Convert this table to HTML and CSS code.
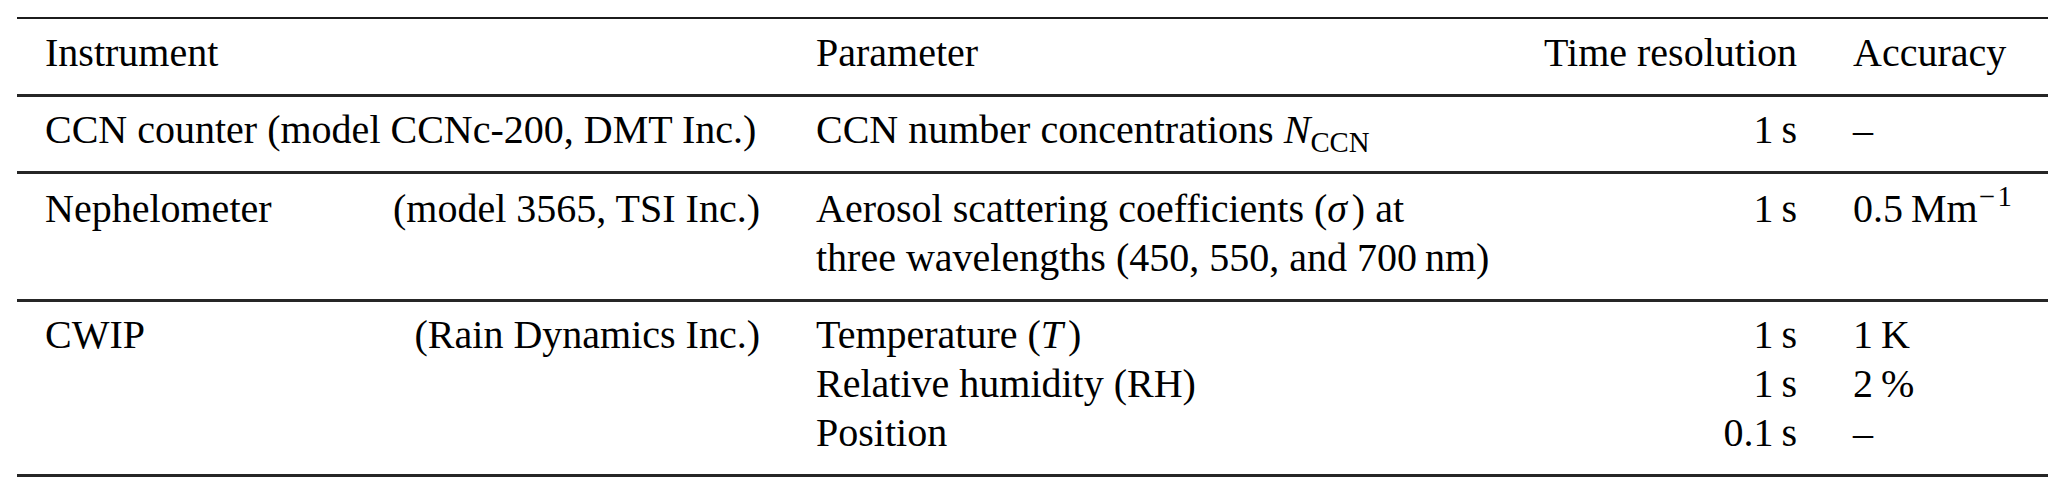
FILE: index.html
```html
<!DOCTYPE html>
<html lang="en">
<head>
<meta charset="utf-8">
<title>Instruments</title>
<link rel="stylesheet" href="styles.css">
</head>
<body>
<table class="inst-table">
  <colgroup>
    <col class="c-inst">
    <col class="c-param">
    <col class="c-time">
    <col class="c-acc">
  </colgroup>
  <thead>
    <tr>
      <th>Instrument</th>
      <th>Parameter</th>
      <th class="num">Time resolution</th>
      <th>Accuracy</th>
    </tr>
  </thead>
  <tbody>
    <tr>
      <td>CCN counter (model CCNc-200, DMT Inc.)</td>
      <td>CCN number concentrations <i class="mi">N</i><sub class="sub">CCN</sub></td>
      <td class="num">1&thinsp;s</td>
      <td>–</td>
    </tr>
    <tr class="row-tall">
      <td><div class="split"><span>Nephelometer</span><span>(model 3565, TSI Inc.)</span></div></td>
      <td>Aerosol scattering coefficients (<i class="mi gap">σ</i>) at<br>three wavelengths (450, 550, and 700&thinsp;nm)</td>
      <td class="num">1&thinsp;s</td>
      <td>0.5&thinsp;Mm<sup class="sup"><span class="minus">−</span>1</sup></td>
    </tr>
    <tr>
      <td><div class="split"><span>CWIP</span><span>(Rain Dynamics Inc.)</span></div></td>
      <td>Temperature (<i class="mi gap">T</i>)<br>Relative humidity (RH)<br>Position</td>
      <td class="num">1&thinsp;s<br>1&thinsp;s<br>0.1&thinsp;s</td>
      <td>1&thinsp;K<br>2&thinsp;%<br>–</td>
    </tr>
  </tbody>
</table>
</body>
</html>
```

FILE: styles.css
```css
html, body {
  margin: 0;
  padding: 0;
  background: #ffffff;
}

.inst-table {
  margin: 17px 0 0 17px;
  width: 2031px;
  table-layout: fixed;
  border-collapse: separate;
  border-spacing: 0;
  font-family: "Liberation Serif", "Times New Roman", serif;
  font-size: 40px;
  line-height: 49px;
  color: #000000;
}

.c-inst { width: 771px; }
.c-param { width: 727px; }
.c-time { width: 310px; }
.c-acc { width: 223px; }

.inst-table th,
.inst-table td {
  text-align: left;
  vertical-align: top;
  font-weight: normal;
  padding: 8px 28px 17px 28px;
  border-bottom: 3px solid #262626;
  white-space: nowrap;
}

.inst-table th {
  border-top: 2px solid #1c1c1c;
  padding-top: 9px;
}

.inst-table .num {
  text-align: right;
}

.row-tall td {
  padding-top: 10px;
}

.split {
  display: flex;
  justify-content: space-between;
}

.mi {
  font-style: italic;
}

.gap {
  margin-right: 0.12em;
}

.sub {
  font-size: 72%;
  line-height: 0;
  vertical-align: -0.3em;
}

.sup {
  font-size: 72%;
  line-height: 0;
  vertical-align: 0.55em;
}

.minus {
  margin-left: 0.04em;
  margin-right: 0.08em;
}
```
